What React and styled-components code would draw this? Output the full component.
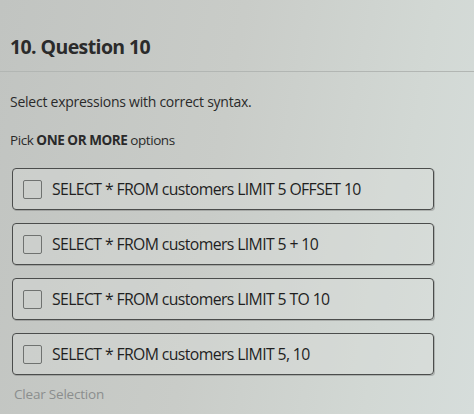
import React from "react";
import styled, { createGlobalStyle } from "styled-components";

const Global = createGlobalStyle`
  html, body { margin: 0; padding: 0; }
  body {
    width: 474px;
    height: 414px;
    overflow: hidden;
    font-family: "Open Sans", "Noto Sans", sans-serif;
    background: linear-gradient(100deg, #c1c4c1 0%, #c9ccc8 45%, #d2d8d4 80%, #d6dddb 100%);
    color: #262626;
  }
`;

const Page = styled.div`
  display: flex;
  flex-direction: column;
  width: 474px;
  height: 414px;
`;

const Header = styled.div`
  padding: 34px 10px 11px 10px;
  border-bottom: 1px solid #b2b6b3;
`;

const Title = styled.h1`
  margin: 0;
  font-size: 19.5px;
  font-weight: 700;
  line-height: 26px;
  letter-spacing: -0.6px;
  color: #2b2b2b;
`;

const Body = styled.div`
  display: flex;
  flex-direction: column;
  padding: 20px 10px 0 10px;
`;

const Prompt = styled.p`
  margin: 0;
  font-size: 14px;
  line-height: 20px;
  letter-spacing: -0.25px;
  color: #2a2a2a;
`;

const Hint = styled.p`
  margin: 18px 0 0 0;
  font-size: 13.5px;
  line-height: 20px;
  letter-spacing: -0.45px;
  color: #2a2a2a;
  b { font-weight: 700; }
`;

const Options = styled.div`
  display: flex;
  flex-direction: column;
  gap: 13px;
  margin: 18px 0 0 2px;
  width: 422px;
`;

const Option = styled.label`
  display: flex;
  align-items: center;
  gap: 10px;
  height: 42px;
  box-sizing: border-box;
  padding: 0 10px;
  border: 1.5px solid #4b4d4c;
  border-radius: 4px;
  background: rgba(222, 224, 220, 0.35);
  box-shadow: 1px 1px 0 rgba(60, 60, 60, 0.25);
  cursor: pointer;
`;

const Box = styled.span`
  width: 19px;
  height: 19px;
  box-sizing: border-box;
  border: 1.5px solid #6f7270;
  border-radius: 2px;
  flex: none;
`;

const OptionText = styled.span`
  font-size: 15.8px;
  letter-spacing: -0.62px;
  color: #1f1f1f;
`;

const Clear = styled.button`
  align-self: flex-start;
  margin: 10px 0 0 4px;
  padding: 0;
  border: none;
  background: none;
  font-family: inherit;
  font-size: 13.5px;
  color: #8b8e8e;
  letter-spacing: -0.2px;
`;

const items = [
  "SELECT * FROM customers LIMIT 5 OFFSET 10",
  "SELECT * FROM customers LIMIT 5 + 10",
  "SELECT * FROM customers LIMIT 5 TO 10",
  "SELECT * FROM customers LIMIT 5, 10",
];

export default function App() {
  return (
    <Page>
      <Global />
      <Header>
        <Title>10. Question 10</Title>
      </Header>
      <Body>
        <Prompt>Select expressions with correct syntax.</Prompt>
        <Hint>
          Pick <b>ONE OR MORE</b> options
        </Hint>
        <Options>
          {items.map((t) => (
            <Option key={t}>
              <Box />
              <OptionText>{t}</OptionText>
            </Option>
          ))}
        </Options>
        <Clear>Clear Selection</Clear>
      </Body>
    </Page>
  );
}
